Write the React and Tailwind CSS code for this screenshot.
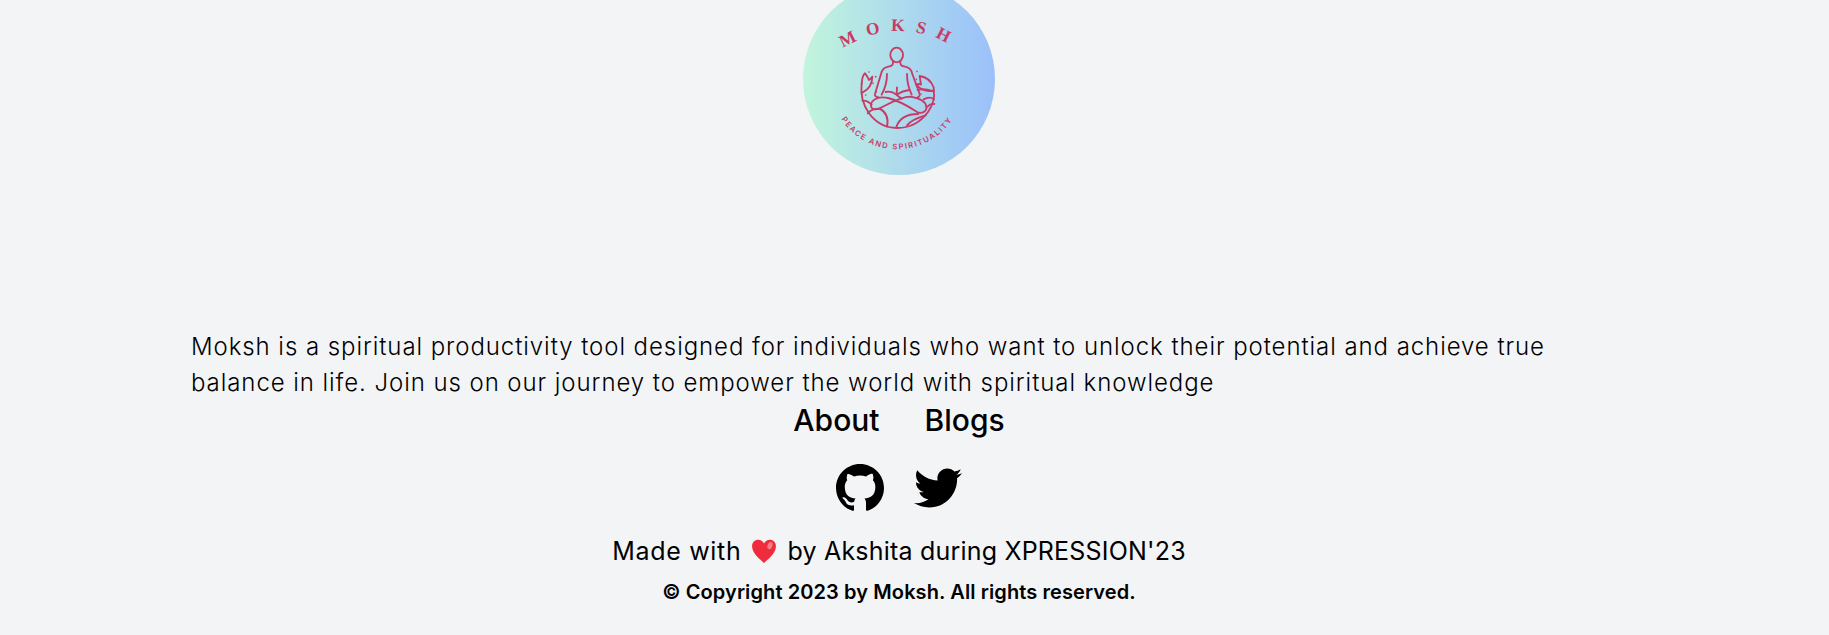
import { BsGithub } from 'react-icons/bs';
import { FaTwitter } from 'react-icons/fa';

function Logo() {
  return (
    <div className="w-48 h-48 rounded-full bg-gradient-to-r from-[#c2f5dc] to-[#9bc0fa] -mt-[17px] shrink-0">
      <svg viewBox="70 -51 576 576" className="w-48 h-48" fill="none">
        <defs>
          <path id="topArc" d="M160 170 A300 300 0 0 1 560 170" />
          <path id="bottomArc" d="M172 335 A200 200 0 0 0 532 335" />
        </defs>
        <text fill="#c73b66" fontFamily="'Liberation Serif', serif" fontWeight="700" fontSize="52">
          <textPath href="#topArc" startOffset="50%" textAnchor="middle" letterSpacing="32">MOKSH</textPath>
        </text>
        <text fill="#c73b66" fontFamily="Inter, sans-serif" fontWeight="600" fontSize="23">
          <textPath href="#bottomArc" startOffset="50%" textAnchor="middle" letterSpacing="4.6">PEACE AND SPIRITUALITY</textPath>
        </text>
        <g stroke="#c73b66" strokeWidth="5.5" strokeLinecap="round" strokeLinejoin="round">
          {/* head + torso */}
          <ellipse cx="351" cy="165" rx="19" ry="22" />
          <path d="M340 185 Q342 198 326 200 Q308 203 304 222 L286 282 Q284 290 296 292" />
          <path d="M362 185 Q360 198 376 200 Q394 203 398 222 L420 282 Q422 290 410 294" />
          <path d="M322 222 Q322 255 306 284 M382 222 Q382 255 396 284" />
          <path d="M318 276 Q336 272 350 284 M352 262 Q352 276 350 284 M388 270 Q370 272 350 284 M350 284 L366 296" />
          {/* crossed legs */}
          <path d="M274 318 C272 298 300 288 325 294 C365 304 395 325 412 336 C425 342 442 336 440 320 C438 304 415 294 392 290 C360 290 320 316 300 325 C286 331 275 328 274 318 Z" />
          {/* bowl */}
          <path d="M246 250 Q240 300 268 340 Q300 384 352 384 Q410 384 445 336 Q468 304 462 270" />
          <path d="M248 302 Q262 300 276 314 M264 340 Q276 326 300 326 Q330 342 322 380" />
          <path d="M350 382 Q362 342 416 342 M382 376 Q396 358 438 346" />
          <path d="M432 298 Q450 288 463 298 M444 320 Q452 310 464 312" />
          {/* lotus */}
          <path d="M246 250 Q248 226 256 220 Q264 230 268 240 Q276 234 278 230 Q278 262 248 278" />
          <path d="M420 228 Q450 232 462 262 L462 272 Q430 278 410 254 Q420 250 424 254 Z" />
          <path d="M414 270 Q430 264 462 274" />
        </g>
        <g fill="#c73b66">
          <circle cx="268" cy="216" r="2.5" /><circle cx="288" cy="230" r="2.5" /><circle cx="280" cy="250" r="2.5" />
          <circle cx="290" cy="276" r="2.5" /><circle cx="258" cy="285" r="2.5" /><circle cx="412" cy="214" r="2.5" />
          <circle cx="410" cy="238" r="2.5" /><circle cx="424" cy="282" r="2.5" />
        </g>
      </svg>
    </div>
  );
}

function Heart() {
  return (
    <svg viewBox="0 0 24 24" className="w-[26px] h-[26px]">
      <path d="M12 23 C4 16 1 12 1 7.5 C1 3.8 3.6 1.5 6.6 1.5 C9 1.5 11 3 12 5 C13 3 15 1.5 17.4 1.5 C20.4 1.5 23 3.8 23 7.5 C23 12 20 16 12 23 Z" fill="#f02b3c" />
      <ellipse cx="17.5" cy="7" rx="2.2" ry="3.4" fill="#f77e84" transform="rotate(20 17.5 7)" />
    </svg>
  );
}

export default function App() {
  return (
    <div className="h-[635px] overflow-hidden bg-gray-100 pr-[31px]">
      <div className="flex flex-col items-center text-black font-['Inter',sans-serif]">
        <Logo />
        <p className="w-full px-[191px] mt-[154px] text-2xl leading-9 font-light tracking-[0.93px] text-black">
          Moksh is a spiritual productivity tool designed for individuals who want to unlock their potential and achieve true balance in life. Join us on our journey to empower the world with spiritual knowledge
        </p>
        <nav className="flex gap-[45px] text-[30px] leading-9 font-medium mt-[1px]">
          <a href="#about">About</a>
          <a href="#blogs">Blogs</a>
        </nav>
        <div className="flex items-start gap-[30px] mt-[26px]">
          <BsGithub className="w-12 h-12" />
          <FaTwitter className="w-12 h-12" />
        </div>
        <div className="flex items-center mt-[21px] text-[25px] leading-9">
          <span className="tracking-[0.7px]">Made with</span>
          <span className="mx-[10px]"><Heart /></span>
          <span className="tracking-[0.2px]">by Akshita during XPRESSION'23</span>
        </div>
        <p className="mt-[9px] text-xl font-semibold leading-7 tracking-[0.1px]">© Copyright 2023 by Moksh. All rights reserved.</p>
      </div>
    </div>
  );
}
